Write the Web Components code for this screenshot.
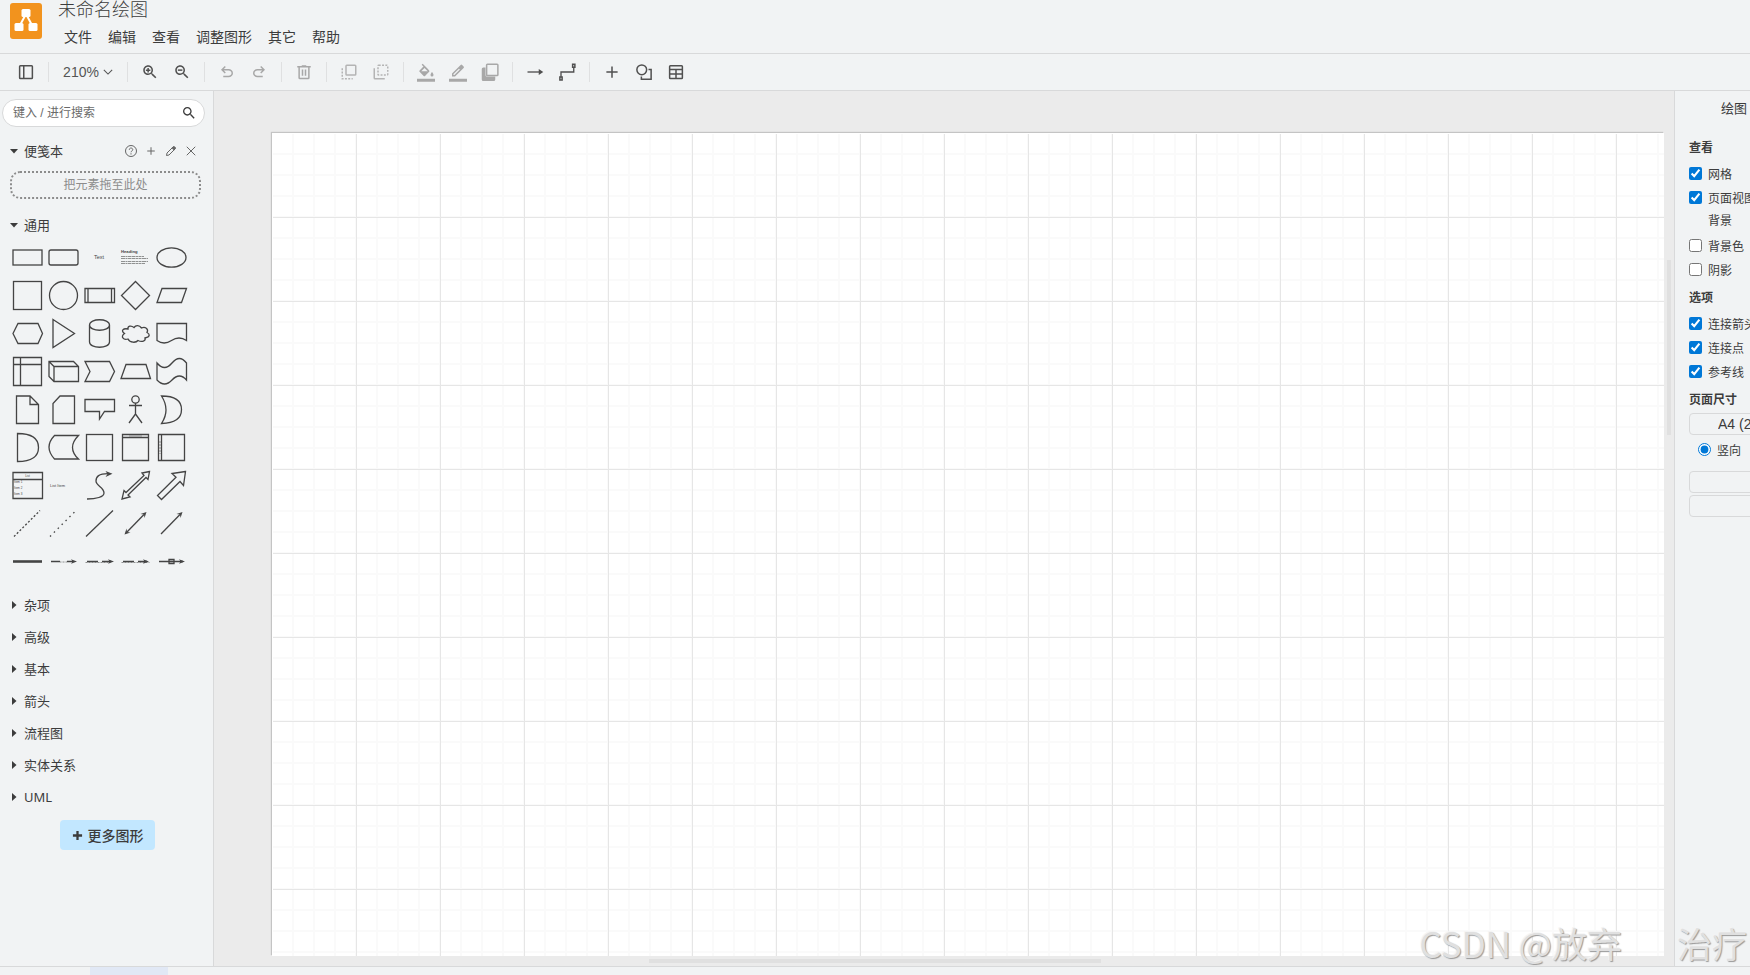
<!DOCTYPE html>
<html lang="zh-CN">
<head>
<meta charset="utf-8">
<title>未命名绘图</title>
<style>
html, body {
  height: 100%;
  margin: 0;
}
body {
  font-family: "Liberation Sans", "Noto Sans CJK SC", sans-serif;
  font-size: 13px;
  color: #3c3c3c;
  overflow: hidden;
}
</style>
</head>
<body>
<diagram-editor></diagram-editor>

<script>
// 24 unit icons
const zoomLens = '<path d="M15.5 14h-.79l-.28-.27C15.41 12.59 16 11.11 16 9.5 16 5.91 13.09 3 9.5 3S3 5.91 3 9.5 5.91 16 9.5 16c1.61 0 3.09-.59 4.23-1.57l.27.28v.79l5 4.99L20.49 19l-4.99-5zm-6 0C7.01 14 5 11.99 5 9.5S7.01 5 9.5 5 14 7.01 14 9.5 11.99 14 9.5 14z"/>';
const undoPath = '<path d="M7 19v-2h7.1q1.575 0 2.738-1Q18 15 18 13.5T16.838 11Q15.675 10 14.1 10H7.8l2.6 2.6L9 14 4 9l5-5 1.4 1.4L7.8 8h6.3q2.425 0 4.163 1.575Q20 11.15 20 13.5q0 2.35-1.737 3.925Q16.525 19 14.1 19Z"/>';
const line = (body, w = 2) => `<g fill="none" stroke="currentColor" stroke-width="${w}">${body}</g>`;

const icons = {
  sidebar: line('<rect x="3.5" y="3.5" width="17" height="17" rx="1"/><path d="M9 3v18"/>'),
  chevron: line('<path d="M2 7l10 10L22 7"/>', 2.6),
  search: zoomLens,
  zoomIn: zoomLens + '<path d="M8.5 6.5h2v2h2v2h-2v2h-2v-2h-2v-2h2z"/>',
  zoomOut: zoomLens + '<path d="M6.5 8.5h6v2h-6z"/>',
  undo: undoPath,
  redo: `<g transform="translate(24 0) scale(-1 1)">${undoPath}</g>`,
  trash: line('<path d="M3 5h18M9 4h6M5.5 5v14.5q0 1 1 1h11q1 0 1-1V5M10 8.5v8.5M14 8.5v8.5"/>'),
  toFront: line('<rect x="8" y="3" width="13" height="13" rx="1"/><path d="M3 7v14h14" stroke-dasharray="2.6 1.8"/>'),
  toBack: line('<rect x="8" y="3" width="13" height="13" rx="1" stroke-dasharray="2.6 1.8"/><path d="M3 7v13q0 1 1 1h13"/>'),
  fill: '<path d="M14.6 7.9 7.6 1 6.2 2.4l2.4 2.4-5.2 5.1q-.8.9 0 1.8l5.5 5.5q.9.7 1.8 0l5.5-5.5q.8-.9 0-1.8zM5.7 11 10 6.6l4.3 4.4zM20 12s-2 2.5-2 4a2 2 0 0 0 4 0c0-1.5-2-4-2-4z"/><path d="M0 21h24v4H0z"/>',
  pen: '<path d="M4 18v-4L15.5 2.5q1-1 2 0L19.5 4.5q1 1 0 2L8 18zM6 16h1.2l7.3-7.3-1.2-1.2L6 14.8z"/><path d="M0 21h24v4H0z"/>',
  shadow: line('<rect x="7.5" y="1.5" width="15" height="15" rx="1"/>') + '<path d="M6 6H3q-2 0-2 2v14q0 2 2 2h14q2 0 2-2v-4H8q-2 0-2-2z"/>',
  arrow: line('<path d="M2 12h16"/>', 1.8) + '<path d="M17 8 23 12l-6 4z"/>',
  waypoint: line('<path d="M4 20v-8h17V4"/>', 1.8) + line('<path d="M2.5 18.5h3v4h-3zM19.5 1.5h3v4h-3z" fill="#f1f3f4"/>'),
  plus: line('<path d="M12 4.5v15M4.5 12h15"/>'),
  shapes: line('<circle cx="9" cy="9" r="6.5"/><path d="M18 8.5h3.5v13h-13V18"/>'),
  table: line('<rect x="3.5" y="3.5" width="17" height="17" rx="1"/><path d="M3 8.5h18M3 14.5h18M12 8v13"/>'),
  help: line('<circle cx="12" cy="12" r="11"/><path d="M8.5 9.5c.2-4.500 7-4.500 7-.2 0 2.700-3.500 2.500-3.500 5.200M12 16.500v2.500"/>', 2),
  pencil: line('<path d="M3 21l1-5L16 4q1.5-1.5 3 0l1 1q1.5 1.5 0 3L8 20z"/>') + '<path d="m13 6 5-4L22 6 18 11z"/>',
  close: line('<path d="M3.5 3.5l17 17M20.5 3.5l-17 17"/>', 2),
  bold: line('<path d="M12 2v20M2 12h20"/>', 5)
};

// one palette entry per cell, drawn on a 36x38 box
const head = '<path class="solid" d="M31.5 7.700 24.500 5 26.500 8 24.500 11z"/>';
const smallArrow = (x) => `<path class="solid" d="M${x} 19.5l-6-2.300 1.600 2.300-1.600 2.300z"/>`;
const shapes = [
  ["矩形", '<rect x="4" y="12" width="29" height="15"/>'],
  ["圆角矩形", '<rect x="4" y="12" width="29" height="15" rx="2"/>'],
  ["文本", '<text x="18" y="21" font-size="5.5" text-anchor="middle">Text</text>'],
  ["标题文本", '<text x="4" y="14.5" font-size="4.2" font-weight="bold">Heading</text><path class="thin" d="M4 18.5h23M4 20.5h27M4 23.5h27M4 25.5h24" stroke-dasharray="4 .5 2 .5 3 .5"/>'],
  ["椭圆", '<ellipse cx="18.5" cy="19.5" rx="14.5" ry="9.7"/>'],
  ["正方形", '<rect x="4.5" y="5.5" width="28" height="28"/>'],
  ["圆形", '<circle cx="18.5" cy="19.5" r="14"/>'],
  ["流程", '<path d="M4 12.5h29.5v14H4zM7 12.5v14M30.5 12.5v14"/>'],
  ["菱形", '<path d="M18.5 5.5l14 14-14 14-14-14z"/>'],
  ["平行四边形", '<path d="M9 12.5h24.5l-5 14H4z"/>'],
  ["六边形", '<path d="M9 9.5h20l4.5 10-4.5 10H9l-5-10z"/>'],
  ["三角形", '<path d="M8 5.5l21.5 14L8 33.5z"/>'],
  ["圆柱", '<path d="M8.5 11c0-7 20-7 20 0v17c0 7-20 7-20 0zc0 7 20 7 20 0"/>'],
  ["云", '<path d="M11 15c-5-1-7.500 2-3.500 4.500-4.500 3-1 7 3.500 5.500 2 4 8 4 10 1.500 4 2 8 .5 7-2.500 5.500-1 5-4 2-5.500 2-4-2-6-5.500-4.500-2.500-3.500-6-2.500-7.500-.5-3-2.500-6.500-1.500-6 1.500z"/>'],
  ["文档", '<path d="M4 9.5h29.5v17q-7.5-5-15 0T4 26.5z"/>'],
  ["内部存储", '<path d="M4.5 5.5h28v28h-28zM11.5 5.5v28M4.5 12.5h28"/>'],
  ["立方体", '<path d="M4 9.5h24.5l5 5v15H9l-5-5zl5 5h24.5M9 14.5v15"/>'],
  ["步骤", '<path d="M4 9.5h24.5l5 10-5 10H4l5-10z"/>'],
  ["梯形", '<path d="M9 12.5h20l4.5 14H4z"/>'],
  ["磁带", '<path d="M4 11q7.5 9 15 0t14.5 0v17q-7-8-14.5 0T4 28z"/>'],
  ["便签", '<path d="M7.5 6h13.5l8.500 8.5v19H7.5zM21 6v8.5h8.5"/>'],
  ["卡片", '<path d="M15 6h14.5v27.5H8v-20z"/>'],
  ["标注", '<path d="M4 9.5h29.5v12H23.5L18.5 29v-7.5H4z"/>'],
  ["参与者", '<circle cx="18.5" cy="9.5" r="3.7"/><path d="M18.5 13v11M12 15.5h13M18.5 24 12 33M18.5 24l6.5 9"/>'],
  ["或", '<path d="M8.5 6q20 0 20 13.5T8.5 33.5q9-13.5 0-27.500z"/>'],
  ["与", '<path d="M8.5 5.5q21 0 21 14t-21 14z"/>'],
  ["数据存储", '<path d="M9.5 7.5h24q-12 12 0 23.5h-24q-11-12 0-23.5z"/>'],
  ["容器", '<rect x="5.5" y="6.5" width="26" height="26"/>'],
  ["垂直容器", '<path d="M5.5 6.5h26v26h-26zM5.5 9.5h26"/><path class="thin" d="M12 8h13"/>'],
  ["水平容器", '<path d="M5.5 6.5h26v26h-26zM8.5 6.5v26"/><path class="thin" d="M7 13v13" stroke-dasharray="2 1"/>'],
  ["列表", '<path d="M4 6.5h29.5v26H4zM4 13.5h29.5"/><text x="18.5" y="10.5" font-size="3" text-anchor="middle">List</text><text x="5" y="17" font-size="3">Item 1</text><text x="5" y="23" font-size="3">Item 2</text><text x="5" y="29" font-size="3">Item 3</text>'],
  ["列表项", '<text x="5" y="20.5" font-size="4">List Item</text>'],
  ["曲线", '<path d="M6 33c9 0 17-2 17-6 0-6-8-7-8-12 0-5 3-7 12-7.3"/>' + head],
  ["双向箭头", '<path d="M32.5 5.5l-7.5 1.500 2 2.500L9 26.500l-2-2-2 8.500 8-2-2-2 18-17.500 2 2z"/>'],
  ["箭头", '<path d="M32.5 5.5 19 7.5l4 3.7L4.5 29.5l4 4L27 15.5l3.5 4z"/>'],
  ["虚线", '<path d="M5 32.5 31 6.5" stroke-dasharray="2 2"/>'],
  ["点线", '<path d="M5 32.5 31 6.5" stroke-dasharray="1.5 4"/>'],
  ["线条", '<path d="M5 32.5 32 6.5"/>'],
  ["双向连接线", '<path d="M10 28 27 10.5"/><path class="solid" d="M29.5 8l-6 2 3.500.5.5 3.500zM7.5 30.5l2-6 .5 3.500 3.500.5z"/>'],
  ["单向连接线", '<path d="M8 30 27 10.5"/><path class="solid" d="M29.5 8l-6 2 3.500.5.5 3.500z"/>'],
  ["链接", '<path class="thick" d="M4 19.5h29"/>'],
  ["带标签连接", '<path d="M6 19.5h9M22 19.5h6"/><path class="thin" d="M15 20h7" stroke-dasharray="1 .5"/>' + smallArrow(32)],
  ["连接二", '<path d="M6 19.5h11M21 19.5h9"/><path class="thin" d="M4.5 20.5h23" stroke-dasharray="2 1"/>' + smallArrow(33)],
  ["连接三", '<path d="M6 19.5h11M21 19.5h9"/><path class="thin" d="M4.5 20.5h28" stroke-dasharray="2 1"/>' + smallArrow(32)],
  ["带符号连接", '<path d="M6 19.5h24M16 17.5h5v4h-5z"/>' + smallArrow(32)]
];

function define(name, markup, setup) {
  const template = document.createElement("template");
  template.innerHTML = markup;

  customElements.define(name, class extends HTMLElement {
    constructor() {
      super();
      this.attachShadow({ mode: "open" });
      this.shadowRoot.appendChild(template.content.cloneNode(true));
      if (setup) {
        setup(this, this.shadowRoot);
      }
    }
  });
}

const buttonReset = `
button {
  border: 0;
  padding: 0;
  background: none;
  color: inherit;
  font: inherit;
}
`;

class ToolIcon extends HTMLElement {
  connectedCallback() {
    if (this.shadowRoot) {
      return;
    }
    this.attachShadow({ mode: "open" }).innerHTML = `
<style>
:host { display: inline-block; width: 18px; height: 18px; }
svg { display: block; width: 100%; height: 100%; fill: currentColor; overflow: visible; }
</style>
<svg viewBox="0 0 24 24" aria-hidden="true">${icons[this.getAttribute("name")]}</svg>`;
  }
}
customElements.define("tool-icon", ToolIcon);

class ToolButton extends HTMLElement {
  connectedCallback() {
    if (this.shadowRoot) {
      return;
    }
    this.attachShadow({ mode: "open" }).innerHTML = `
<style>
${buttonReset}
:host { display: block; color: #505050; }
:host([muted]) { color: #a8a8a8; }
:host([faint]) { color: #b4b4b4; }
button { display: grid; place-items: center; width: 32px; height: 32px; }
</style>
<button type="button" aria-label="${this.getAttribute("label")}"><tool-icon name="${this.getAttribute("icon")}"></tool-icon></button>`;
  }
}
customElements.define("tool-button", ToolButton);

define("app-header", `
<style>
${buttonReset}
:host {
  display: flex;
  gap: 16px;
  height: 53px;
  padding-left: 10px;
  background: #f1f3f4;
  border-bottom: 1px solid #d8d9da;
}
.logo { width: 32px; height: 36px; margin-top: 3px; }
h1 { margin: 0; font-size: 18px; font-weight: 300; line-height: 21px; }
nav { display: flex; gap: 16px; padding: 5px 6px; font-size: 14px; line-height: 22px; }
</style>
<svg class="logo" viewBox="0 0 32 36">
  <rect width="32" height="36" rx="3" fill="#f2931e"/>
  <path d="M16 11 9 24M16 11l7 13" stroke="#fff" stroke-width="2"/>
  <g fill="#fff"><rect x="11.5" y="6" width="9" height="8" rx="1.5"/><rect x="4.5" y="20" width="9" height="8" rx="1.5"/><rect x="18.5" y="20" width="9" height="8" rx="1.5"/></g>
</svg>
<div>
  <h1>未命名绘图</h1>
  <nav>
    <button>文件</button><button>编辑</button><button>查看</button><button>调整图形</button><button>其它</button><button>帮助</button>
  </nav>
</div>
`);

define("tool-bar", `
<style>
${buttonReset}
:host {
  display: flex;
  align-items: center;
  height: 36px;
  padding-left: 10px;
  background: #f1f3f4;
  border-bottom: 1px solid #d8d9da;
}
i { width: 1px; height: 20px; margin: 0 6px; background: #dfe0e1; }
.zoom {
  display: flex;
  align-items: center;
  justify-content: center;
  gap: 4px;
  width: 66px;
  font-size: 14px;
  line-height: 18px;
  color: #555;
}
.zoom tool-icon { width: 10px; height: 10px; }
</style>
<tool-button icon="sidebar" label="形状"></tool-button><i></i>
<button class="zoom">210%<tool-icon name="chevron"></tool-icon></button><i></i>
<tool-button icon="zoomIn" label="放大"></tool-button>
<tool-button icon="zoomOut" label="缩小"></tool-button><i></i>
<tool-button icon="undo" label="撤销" muted></tool-button>
<tool-button icon="redo" label="重做" muted></tool-button><i></i>
<tool-button icon="trash" label="删除" muted></tool-button><i></i>
<tool-button icon="toFront" label="移至最前" faint></tool-button>
<tool-button icon="toBack" label="移至最后" faint></tool-button><i></i>
<tool-button icon="fill" label="填充颜色" muted></tool-button>
<tool-button icon="pen" label="线条颜色" muted></tool-button>
<tool-button icon="shadow" label="阴影" muted></tool-button><i></i>
<tool-button icon="arrow" label="连接"></tool-button>
<tool-button icon="waypoint" label="航点"></tool-button><i></i>
<tool-button icon="plus" label="插入"></tool-button>
<tool-button icon="shapes" label="形状"></tool-button>
<tool-button icon="table" label="表格"></tool-button>
`);

define("palette-section", `
<style>
${buttonReset}
:host { display: block; }
header { display: flex; align-items: center; height: 32px; padding: 0 16px 0 10px; }
:host([open]) header { height: 26px; }
.title {
  display: flex;
  align-items: center;
  gap: 6px;
  flex: 1;
  font-family: "Noto Sans", "Noto Sans CJK SC", sans-serif;
  line-height: 20px;
}
svg { width: 8px; height: 8px; fill: #3c3c3c; }
:host([open]) svg { transform: rotate(90deg); }
</style>
<header>
  <button class="title"><svg viewBox="0 0 8 8"><path d="M2 0l4.5 4L2 8z"/></svg><slot name="title"></slot></button>
  <slot name="actions"></slot>
</header>
<slot></slot>
`, (host, root) => {
  root.querySelector(".title").addEventListener("click", () => {
    host.toggleAttribute("open");
  });
});

define("shape-grid", `
<style>
${buttonReset}
:host { display: grid; grid-template-columns: repeat(5, 36px); grid-auto-rows: 38px; padding-left: 9px; }
svg { display: block; width: 36px; height: 38px; fill: none; stroke: #444; stroke-width: 1.3; }
.solid { fill: #444; stroke: none; }
.thin { stroke-width: 0.8; stroke: #777; }
.thick { stroke-width: 2.6; }
text { fill: #444; stroke: none; font-family: "Liberation Sans", sans-serif; }
</style>
`, (host, root) => {
  for (const [label, body] of shapes) {
    const button = document.createElement("button");
    button.setAttribute("aria-label", label);
    button.innerHTML = `<svg viewBox="0 0 36 38">${body}</svg>`;
    root.appendChild(button);
  }
});

define("side-bar", `
<style>
${buttonReset}
:host {
  display: block;
  width: 213px;
  background: #f1f3f4;
  border-right: 1px solid #d8d9da;
}
.search {
  display: flex;
  align-items: center;
  height: 26px;
  margin: 8px 8px 11px 2px;
  padding: 0 7px 0 10px;
  border: 1px solid #d8d9da;
  border-radius: 14px;
  background: #fff;
}
input {
  flex: 1;
  min-width: 0;
  border: 0;
  padding: 0;
  outline: 0;
  background: none;
  font: inherit;
  font-size: 12px;
}
input::placeholder { color: #6a6a6a; }
.search tool-icon { width: 16px; height: 16px; }
.actions { display: flex; gap: 8px; color: #666; }
.actions tool-icon { display: block; width: 12px; height: 12px; }
.drop {
  display: grid;
  place-items: center;
  height: 24px;
  margin: 7px 12px 13px 10px;
  border: 2px dotted #8c8c8c;
  border-radius: 10px;
  font-size: 12px;
  line-height: 18px;
  color: #8c8c8c;
}
shape-grid { margin-bottom: 9px; }
.more {
  display: flex;
  align-items: center;
  justify-content: center;
  gap: 5px;
  width: 95px;
  height: 30px;
  margin: 7px auto 0 60px;
  border-radius: 4px;
  background: #c2e7ff;
  font-size: 14px;
  font-weight: 500;
}
.more tool-icon { width: 11px; height: 11px; }
</style>
<label class="search"><input type="text" placeholder="键入 / 进行搜索" aria-label="搜索"><tool-icon name="search"></tool-icon></label>
<palette-section open>
  <span slot="title">便笺本</span>
  <div class="actions" slot="actions">
    <button aria-label="帮助"><tool-icon name="help"></tool-icon></button>
    <button aria-label="添加"><tool-icon name="plus"></tool-icon></button>
    <button aria-label="编辑"><tool-icon name="pencil"></tool-icon></button>
    <button aria-label="关闭"><tool-icon name="close"></tool-icon></button>
  </div>
  <div class="drop">把元素拖至此处</div>
</palette-section>
<palette-section open>
  <span slot="title">通用</span>
  <shape-grid></shape-grid>
</palette-section>
<palette-section><span slot="title">杂项</span></palette-section>
<palette-section><span slot="title">高级</span></palette-section>
<palette-section><span slot="title">基本</span></palette-section>
<palette-section><span slot="title">箭头</span></palette-section>
<palette-section><span slot="title">流程图</span></palette-section>
<palette-section><span slot="title">实体关系</span></palette-section>
<palette-section><span slot="title">UML</span></palette-section>
<button class="more"><tool-icon name="bold"></tool-icon>更多图形</button>
`);

define("drawing-canvas", `
<style>
:host {
  display: grid;
  grid-template-columns: 58px 1fr 10px;
  grid-template-rows: 42px 1fr 10px;
  background: #ebebeb;
}
.page {
  grid-area: 2 / 2;
  border: 1px solid #fff;
  border-width: 1px 0 0 1px;
  background-color: #fff;
  background-image:
    linear-gradient(90deg, #e6e6e6 1px, transparent 1px),
    linear-gradient(#e6e6e6 1px, transparent 1px),
    linear-gradient(90deg, #fafafa 2px, transparent 2px),
    linear-gradient(#fafafa 2px, transparent 2px);
  background-size: 84px 84px, 84px 84px, 21px 21px, 21px 21px;
  background-position: 0 0, 0 0, -1px 0, 0 -1px;
  background-origin: border-box;
  box-shadow: -1px -1px 1px #c4c4c4;
}
.vertical {
  grid-area: 1 / 3 / 4 / 4;
  display: grid;
  grid-template-rows: 169fr 175fr 531fr;
  padding: 0 3px;
}
.horizontal {
  grid-area: 3 / 1 / 4 / 4;
  display: grid;
  grid-template-columns: 435fr 452fr 573fr;
  padding: 3px 0;
}
.vertical div { grid-row: 2; background: #e0e0e0; }
.horizontal div { grid-column: 2; background: #e0e0e0; }
</style>
<div class="page"></div>
<div class="vertical"><div></div></div>
<div class="horizontal"><div></div></div>
`);

define("format-option", `
<style>
:host { display: block; }
label { display: flex; align-items: center; gap: 6px; height: 24px; white-space: nowrap; }
::slotted(input) { width: 13px; height: 13px; margin: 0; flex: none; accent-color: #0078d7; }
</style>
<label><slot></slot></label>
`);

define("format-panel", `
<style>
:host {
  display: block;
  width: 75px;
  overflow: hidden;
  border-left: 1px solid #d8d9da;
  background: #f1f3f4;
  font-size: 12px;
}
.panel { width: 212px; padding-left: 14px; }
h2 { margin: 0 0 4px; padding-left: 32px; font-size: 13px; font-weight: 400; line-height: 36px; }
h3 { margin: 0; padding-top: 4px; font-size: 12px; font-weight: 700; line-height: 26px; }
.indent { padding-left: 19px; line-height: 24px; }
select, button {
  display: block;
  box-sizing: border-box;
  width: 100%;
  height: 22px;
  margin: 0 0 2px;
  border: 1px solid #d8d9da;
  border-radius: 4px;
  background: #f1f3f4;
  color: inherit;
  font: inherit;
}
select { appearance: none; padding: 0 28px; font-size: 14px; }
.direction { padding: 0 0 10px 9px; }
</style>
<div class="panel">
  <h2>绘图</h2>
  <h3>查看</h3>
  <format-option><input type="checkbox" checked aria-label="网格">网格</format-option>
  <format-option><input type="checkbox" checked aria-label="页面视图">页面视图</format-option>
  <div class="indent">背景</div>
  <format-option><input type="checkbox" aria-label="背景色">背景色</format-option>
  <format-option><input type="checkbox" aria-label="阴影">阴影</format-option>
  <h3>选项</h3>
  <format-option><input type="checkbox" checked aria-label="连接箭头">连接箭头</format-option>
  <format-option><input type="checkbox" checked aria-label="连接点">连接点</format-option>
  <format-option><input type="checkbox" checked aria-label="参考线">参考线</format-option>
  <h3>页面尺寸</h3>
  <select aria-label="页面尺寸"><option>A4 (210 mm x 297 mm)</option></select>
  <div class="direction"><format-option><input type="radio" checked aria-label="竖向">竖向</format-option></div>
  <button aria-label="编辑数据"></button>
  <button aria-label="清除默认风格"></button>
</div>
`);

define("page-tabs", `
<style>
:host { display: flex; height: 8px; padding-left: 90px; background: #f1f3f4; border-top: 1px solid #d8d9da; }
.tab { width: 78px; background: #e1e8f5; }
</style>
<div class="tab"></div>
`);

define("water-mark", `
<style>
:host {
  position: absolute;
  right: 3px;
  bottom: 7px;
  display: flex;
  gap: 55px;
  font: 400 35px/50px "Noto Sans CJK SC", sans-serif;
  color: #e0e0e0;
  text-shadow: 1px 1px 1px #999, -1px -1px 0 #f4f4f4;
  pointer-events: none;
}
</style>
<span>CSDN @放弃</span><span>治疗</span>
`);

define("diagram-editor", `
<style>
:host { display: flex; flex-direction: column; height: 100vh; }
main { display: flex; flex: 1; min-height: 0; }
side-bar, format-panel { flex: none; }
drawing-canvas { flex: 1; }
</style>
<app-header></app-header>
<tool-bar></tool-bar>
<main>
  <side-bar></side-bar>
  <drawing-canvas></drawing-canvas>
  <format-panel></format-panel>
</main>
<page-tabs></page-tabs>
<water-mark></water-mark>
`);
</script>
</body>
</html>
